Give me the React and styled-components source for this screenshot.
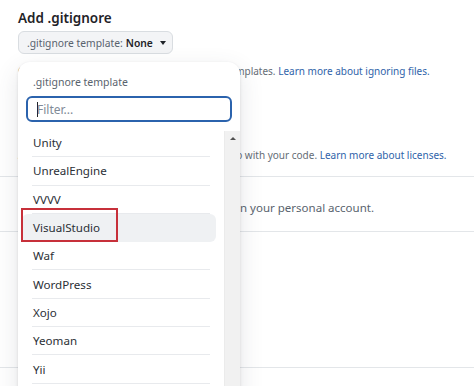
import styled, { createGlobalStyle } from "styled-components";

const GlobalStyle = createGlobalStyle`
  html, body {
    margin: 0;
    background: #ffffff;
  }
  body {
    font-family: "Noto Sans", "Open Sans", sans-serif;
    color: #1f2328;
    overflow: hidden;
  }
`;

const templates = [
  "Unity",
  "UnrealEngine",
  "VVVV",
  "VisualStudio",
  "Waf",
  "WordPress",
  "Xojo",
  "Yeoman",
  "Yii",
  "Zephir",
];

export default function App() {
  return (
    <>
      <GlobalStyle />
      <Page>
        <Section>
          <Title>Add .gitignore</Title>
          <SelectButton>
            <Muted>.gitignore template:</Muted>
            <Strong>None</Strong>
            <Caret />
          </SelectButton>
          <Note>
            Choose which files not to track from a list of templates.{" "}
            <Link>Learn more about ignoring files.</Link>
          </Note>
        </Section>

        <Section>
          <Title>Choose a license</Title>
          <SelectButton>
            <Muted>License:</Muted>
            <Strong>None</Strong>
            <Caret />
          </SelectButton>
          <Note>
            A license tells others what they can and can't do with your code.{" "}
            <Link>Learn more about licenses.</Link>
          </Note>
        </Section>

        <Divider />
        <Info>
          <InfoIcon viewBox="0 0 16 16">
            <circle cx="8" cy="8" r="6.5" fill="none" stroke="#59636e" strokeWidth="1.4" />
            <circle cx="8" cy="5" r="0.9" fill="#59636e" />
            <path d="M8 7.2v4.3" stroke="#59636e" strokeWidth="1.4" strokeLinecap="round" />
          </InfoIcon>
          You are creating a public repository in your personal account.
        </Info>
        <Divider />
        <Spacer />
        <Divider />

        <Popup>
          <PopupHeader>.gitignore template</PopupHeader>
          <FilterBox>
            <TextCaret />
            <Placeholder>Filter...</Placeholder>
          </FilterBox>
          <ListArea>
            <Items>
              {templates.map((name) => (
                <Row key={name} $active={name === "VisualStudio"}>
                  <RowLabel $active={name === "VisualStudio"}>{name}</RowLabel>
                  {name === "VisualStudio" && <Highlight />}
                </Row>
              ))}
            </Items>
            <Scrollbar>
              <ArrowUp />
            </Scrollbar>
          </ListArea>
        </Popup>
      </Page>
    </>
  );
}

const Page = styled.div`
  position: relative;
  height: 386px;
  padding: 8px 0 0 18px;
  box-sizing: border-box;
  overflow: hidden;
`;

const Section = styled.div`
  display: flex;
  flex-direction: column;
  align-items: flex-start;
  margin-bottom: 13px;
`;

const Title = styled.div`
  font-size: 13.5px;
  font-weight: 600;
  line-height: 20px;
  color: #1f2328;
`;

const SelectButton = styled.div`
  display: flex;
  align-items: center;
  gap: 3px;
  margin-top: 3px;
  height: 23px;
  padding: 0 6px 0 8px;
  box-sizing: border-box;
  background: #f3f4f6;
  border: 1px solid #d9dde1;
  border-radius: 6px;
  font-size: 10.3px;
`;

const Muted = styled.span`
  color: #59636e;
`;

const Strong = styled.span`
  font-weight: 600;
  color: #1f2328;
`;

const Caret = styled.span`
  width: 0;
  height: 0;
  margin-left: 4px;
  border-left: 3.5px solid transparent;
  border-right: 3.5px solid transparent;
  border-top: 4px solid #1f2328;
`;

const Note = styled.div`
  margin-top: 9px;
  font-size: 10px;
  line-height: 16px;
  color: #656d76;
  white-space: nowrap;
`;

const Link = styled.span`
  color: #2f63a9;
`;

const Divider = styled.div`
  height: 1px;
  margin-left: -18px;
  background: #e3e6e9;
`;

const Info = styled.div`
  display: flex;
  align-items: center;
  gap: 8px;
  padding: 22px 0 14px 2px;
  font-size: 11.5px;
  line-height: 18px;
  color: #59636e;
  white-space: nowrap;
`;

const InfoIcon = styled.svg`
  width: 15px;
  height: 15px;
  flex-shrink: 0;
`;

const Spacer = styled.div`
  height: 135px;
`;

const Popup = styled.div`
  position: absolute;
  left: 18px;
  top: 62px;
  width: 222px;
  height: 340px;
  background: #ffffff;
  border-radius: 12px 12px 0 0;
  box-shadow: 0 1px 3px rgba(31, 35, 40, 0.12), 0 8px 24px rgba(66, 74, 83, 0.14);
  display: flex;
  flex-direction: column;
`;

const PopupHeader = styled.div`
  flex-shrink: 0;
  padding: 12px 0 0 15px;
  height: 16px;
  line-height: 16px;
  font-size: 10.5px;
  color: #59636e;
`;

const FilterBox = styled.div`
  flex-shrink: 0;
  display: flex;
  align-items: center;
  margin: 6px 8px 0;
  height: 26px;
  padding-left: 9px;
  box-sizing: border-box;
  border: 2px solid #2b63ad;
  border-radius: 6px;
`;

const TextCaret = styled.span`
  width: 1px;
  height: 15px;
  margin-right: -1px;
  background: #1f2328;
`;

const Placeholder = styled.span`
  font-size: 12px;
  color: #818b98;
`;

const ListArea = styled.div`
  display: flex;
  flex: 1;
  margin-top: 7px;
`;

const Items = styled.div`
  flex: 1;
  padding: 0 8px 0 4px;
`;

const Row = styled.div`
  position: relative;
  height: 28.3px;
  padding: 0 6px 0 10px;
  border-radius: 6px;
  background: ${(p) => (p.$active ? "#eff1f3" : "transparent")};
`;

const RowLabel = styled.div`
  display: flex;
  align-items: center;
  height: 100%;
  padding-left: 1px;
  box-sizing: border-box;
  border-bottom: 1px solid ${(p) => (p.$active ? "transparent" : "#e8eaed")};
  font-size: 11.6px;
  color: #2b3036;
`;

const Highlight = styled.div`
  position: absolute;
  left: -1px;
  top: -6px;
  width: 97px;
  height: 34px;
  box-sizing: border-box;
  border: 2px solid #c7303a;
`;

const Scrollbar = styled.div`
  width: 15px;
  margin-top: 2px;
  display: flex;
  justify-content: center;
  background: #f1f1f1;
  border-left: 1px solid #ebebeb;
`;

const ArrowUp = styled.span`
  margin-top: 6px;
  width: 0;
  height: 0;
  border-left: 3px solid transparent;
  border-right: 3px solid transparent;
  border-bottom: 3px solid #505050;
`;
